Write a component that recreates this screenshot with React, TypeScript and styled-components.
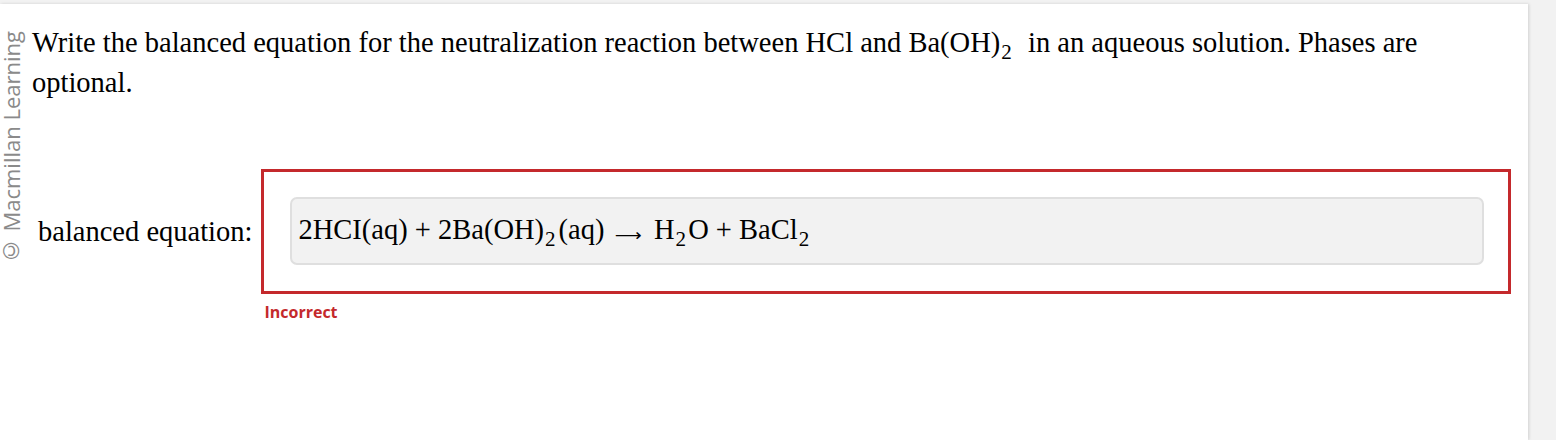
import styled, { createGlobalStyle } from 'styled-components';

const GlobalStyle = createGlobalStyle`
  html, body {
    margin: 0;
    padding: 0;
    background: #f2f2f2;
  }
  body {
    font-family: "Liberation Serif", "Times New Roman", serif;
  }
`;

const Page = styled.div`
  height: 440px;
  padding-top: 4px;
  box-sizing: border-box;
  overflow: hidden;
`;

const Panel = styled.main`
  display: flex;
  width: 1528px;
  height: 436px;
  background: #fff;
  box-shadow: 1px 0 3px rgba(0, 0, 0, 0.14);
`;

const Watermark = styled.aside`
  flex-shrink: 0;
  width: 22px;
  padding-top: 27px;
  box-sizing: border-box;
`;

const WatermarkText = styled.span`
  display: block;
  writing-mode: vertical-rl;
  transform: rotate(180deg);
  font-family: "Open Sans", "Liberation Sans", sans-serif;
  font-size: 22px;
  line-height: 22px;
  color: #8a8a8a;
  white-space: nowrap;
`;

const Content = styled.section`
  flex: 1;
  padding: 19px 17px 0 10px;
  color: #000;
`;

const Question = styled.p`
  margin: 0;
  font-size: 28.5px;
  line-height: 40px;
`;

const Sub = styled.sub<{ $gap?: number }>`
  font-size: 0.74em;
  vertical-align: -0.34em;
  line-height: 0;
  margin: 0 ${p => p.$gap ?? 0}px 0 1px;
`;

const Arrow = styled.span`
  display: inline-block;
  font-family: "DejaVu Sans", sans-serif;
  font-size: 0.6em;
  margin: 0 13px 0 12px;
  transform: translateY(2px) scaleX(1.1);
`;

const AnswerGrid = styled.div`
  display: grid;
  grid-template-columns: auto 1fr;
  column-gap: 9px;
  align-items: center;
  margin-top: 66px;
  padding-left: 6px;
`;

const Label = styled.label`
  font-size: 28.5px;
  line-height: 40px;
`;

const AnswerBox = styled.div<{ $state: 'incorrect' | 'neutral' }>`
  border: 3px solid ${p => (p.$state === 'incorrect' ? '#c4292c' : '#ccc')};
  padding: 25px 24px 26px 26px;
`;

const EquationField = styled.div`
  height: 64px;
  display: flex;
  align-items: center;
  padding: 0 6px;
  background: #f2f2f2;
  border: 2px solid #dfdfdf;
  border-radius: 7px;
  font-size: 28.5px;
  line-height: 40px;
  white-space: nowrap;
`;

const Feedback = styled.div`
  grid-column: 2;
  margin-top: 7px;
  padding-left: 3px;
  font-family: "Open Sans", "Liberation Sans", sans-serif;
  font-weight: 700;
  font-size: 16px;
  line-height: 22px;
  color: #c4292c;
`;

export default function App() {
  return (
    <>
      <GlobalStyle />
      <Page>
        <Panel>
          <Watermark>
            <WatermarkText>© Macmillan Learning</WatermarkText>
          </Watermark>
          <Content>
            <Question>
              Write the balanced equation for the neutralization reaction between HCl and Ba(OH)
              <Sub $gap={2}>2</Sub> &nbsp;in an aqueous solution. Phases are optional.
            </Question>
            <AnswerGrid>
              <Label>balanced equation:</Label>
              <AnswerBox $state="incorrect">
                <EquationField>
                  <span>
                    2HCI(aq) + 2Ba(OH)<Sub $gap={3}>2</Sub>(aq)
                    <Arrow>⟶</Arrow>H<Sub $gap={2}>2</Sub>O + BaCl<Sub>2</Sub>
                  </span>
                </EquationField>
              </AnswerBox>
              <Feedback>Incorrect</Feedback>
            </AnswerGrid>
          </Content>
        </Panel>
      </Page>
    </>
  );
}
